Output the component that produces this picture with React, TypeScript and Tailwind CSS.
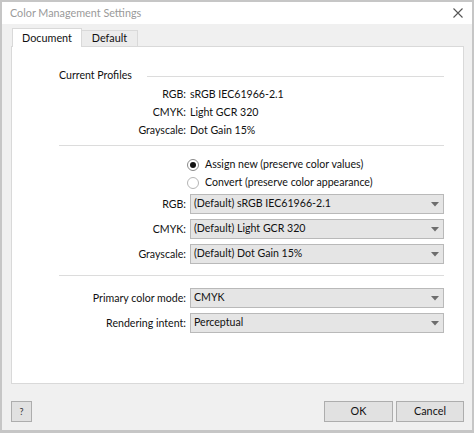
import React, { useState } from 'react';

const font = { fontFamily: '"Segoe UI", Lato, "Noto Sans", sans-serif' };

const Arrow: React.FC = () => (
    <svg width="8" height="5" viewBox="0 0 8 5" className="shrink-0">
        <path d="M0 0 L8 0 L4 4.5 Z" fill="#6d6d6d" />
    </svg>
);

interface SelectProps {
    value: string;
}

const Select: React.FC<SelectProps> = ({ value }) => (
    <div className="h-[20px] w-full flex items-center justify-between bg-[#e5e5e5] border border-[#b9b9b9] pl-[3px] pr-[4px] text-[10.6px] text-[#111]">
        <span>{value}</span>
        <Arrow />
    </div>
);

const Label: React.FC<{ children: React.ReactNode }> = ({ children }) => (
    <div className="text-right text-[10.6px] text-[#111] leading-[18px] whitespace-nowrap">{children}</div>
);

const Radio: React.FC<{ checked: boolean; label: string; onClick: () => void }> = ({ checked, label, onClick }) => (
    <div className="h-[18px] flex items-center gap-[6px] cursor-default" onClick={onClick}>
        <span className={`w-[12px] h-[12px] rounded-full border bg-white flex items-center justify-center ${checked ? 'border-[#8a8a8a]' : 'border-[#b5b5b5]'}`}>
            {checked && <span className="w-[6px] h-[6px] rounded-full bg-[#111]" />}
        </span>
        <span className="text-[10.6px] text-[#111]">{label}</span>
    </div>
);

export default function App() {
    const [mode, setMode] = useState<'assign' | 'convert'>('assign');

    return (
        <div className="w-[474px] h-[433px] bg-[#c6c6c6] pl-[2px] pt-[2px] pr-[2px] pb-[3px]" style={font}>
            <div className="w-full h-full flex flex-col bg-[#f0f0f0]">
                {/* Title bar */}
                <div className="h-[22px] bg-white flex items-center justify-between pl-[8px] pr-[9px]">
                    <span className="text-[10.8px] text-[#9a9a9a]">Color Management Settings</span>
                    <svg width="10" height="10" viewBox="0 0 10 10">
                        <path d="M0.5 0.5 L9.5 9.5 M9.5 0.5 L0.5 9.5" stroke="#555" strokeWidth="1.1" />
                    </svg>
                </div>

                <div className="flex-1 flex flex-col pl-[9px] pr-[8px] pt-[4px] pb-[8px]">
                    {/* Tabs */}
                    <div className="flex items-end h-[18px]">
                        <div className="relative z-10 -mb-px ml-[1px] w-[70px] h-[19px] bg-white border border-b-0 border-[#d9d9d9] flex items-center justify-center text-[10.8px] text-[#111]">
                            Document
                        </div>
                        <div className="w-[56px] h-[16px] bg-[#ececec] border border-l-0 border-b-0 border-[#d9d9d9] flex items-center justify-center text-[10.8px] text-[#111]">
                            Default
                        </div>
                    </div>

                    {/* Panel */}
                    <div className="h-[338px] bg-white border border-[#d9d9d9] pl-[47px] pr-[19px] pt-[20px]">
                        <div className="h-[18px] flex items-center gap-[15px]">
                            <span className="text-[10.6px] text-[#111]">Current Profiles</span>
                            <div className="flex-1 h-px bg-[#dcdcdc]" />
                        </div>
                        <div className="grid grid-cols-[127px_1fr] gap-x-[4px]">
                            <Label>RGB:</Label>
                            <div className="text-[10.6px] text-[#111] leading-[18px]">sRGB IEC61966-2.1</div>
                            <Label>CMYK:</Label>
                            <div className="text-[10.6px] text-[#111] leading-[18px]">Light GCR 320</div>
                            <Label>Grayscale:</Label>
                            <div className="text-[10.6px] text-[#111] leading-[18px]">Dot Gain 15%</div>
                        </div>

                        <div className="mt-[6px] h-px bg-[#dcdcdc]" />

                        <div className="mt-[10px] pl-[128px]">
                            <Radio checked={mode === 'assign'} label="Assign new (preserve color values)" onClick={() => setMode('assign')} />
                            <Radio checked={mode === 'convert'} label="Convert (preserve color appearance)" onClick={() => setMode('convert')} />
                        </div>

                        <div className="mt-[2px] grid grid-cols-[127px_1fr] gap-x-[4px] gap-y-[5px] items-center">
                            <Label>RGB:</Label>
                            <Select value="(Default) sRGB IEC61966-2.1" />
                            <Label>CMYK:</Label>
                            <Select value="(Default) Light GCR 320" />
                            <Label>Grayscale:</Label>
                            <Select value="(Default) Dot Gain 15%" />
                        </div>

                        <div className="mt-[11px] h-px bg-[#dcdcdc]" />

                        <div className="mt-[12px] grid grid-cols-[127px_1fr] gap-x-[4px] gap-y-[5px] items-center">
                            <Label>Primary color mode:</Label>
                            <Select value="CMYK" />
                            <Label>Rendering intent:</Label>
                            <Select value="Perceptual" />
                        </div>
                    </div>

                    {/* Footer */}
                    <div className="mt-[17px] flex items-center">
                        <button className="w-[21px] h-[21px] bg-[#e1e1e1] border border-[#adadad] text-[9px] text-[#333] flex items-center justify-center">?</button>
                        <div className="flex-1" />
                        <button className="w-[69px] h-[21px] bg-[#e1e1e1] border border-[#adadad] text-[10.8px] text-[#111]">OK</button>
                        <button className="ml-[3px] w-[68px] h-[21px] bg-[#e1e1e1] border border-[#adadad] text-[10.8px] text-[#111]">Cancel</button>
                    </div>
                </div>
            </div>
        </div>
    );
}
